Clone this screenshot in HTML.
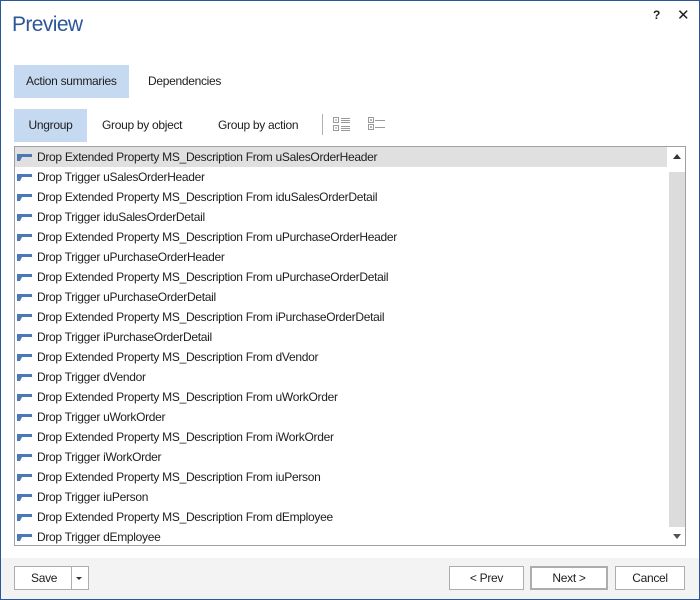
<!DOCTYPE html>
<html><head><style>
*{margin:0;padding:0;box-sizing:border-box}
body{width:700px;height:600px;background:#fff;font-family:"Liberation Sans",sans-serif;font-size:12px;color:#1e1e1e;position:relative;overflow:hidden;letter-spacing:-0.3px}
.win{position:absolute;left:0;top:0;width:700px;height:600px;border:1px solid #2b579a}
.title{position:absolute;left:12px;top:13px;font-size:21px;color:#2b579a;letter-spacing:-0.6px}
.help{position:absolute;left:653px;top:8px;font-weight:bold;font-size:12px}
.close{position:absolute;left:677px;top:6px;font-size:15px}
.tab{position:absolute;height:33px;line-height:33px;padding:0 12px;font-size:12px}
.sel{background:#c5d9f1}
.list{position:absolute;left:14px;top:146px;width:672px;height:400px;border:1px solid #a0a0a0;background:#fff}
.row{height:20px;line-height:20px;padding-left:22px;position:relative;white-space:nowrap}
.row svg{position:absolute;left:2px;top:6px}
.row.h{background:#e0e0e0;margin-right:18px}
.sb{position:absolute;right:0;top:0;width:17px;height:398px;background:#fff}
.thumb{position:absolute;left:1px;top:25px;width:16px;height:355px;background:#dcdcdc}
.footer{position:absolute;left:1px;top:558px;width:698px;height:41px;background:#f3f3f3}
.btn{position:absolute;top:566px;height:24px;border:1px solid #adadad;background:#fff;text-align:center;line-height:22px;font-size:12px}
</style></head><body>
<div class="win"></div>
<div class="title">Preview</div>
<div class="help">?</div><div class="close">✕</div>
<div class="tab sel" style="left:14px;top:65px">Action summaries</div>
<div class="tab" style="left:136px;top:65px">Dependencies</div>
<div class="tab sel" style="left:14px;top:109px;width:73px;text-align:center;padding:0">Ungroup</div>
<div class="tab" style="left:90px;top:109px">Group by object</div>
<div class="tab" style="left:206px;top:109px">Group by action</div>
<div style="position:absolute;left:322px;top:114px;width:1px;height:21px;background:#b0b0b0"></div>
<svg style="position:absolute;left:333px;top:117px" width="18" height="18" viewBox="0 0 18 18" fill="none" stroke="#999" stroke-width="1"><rect x="0.5" y="0.5" width="5" height="5"/><rect x="0.5" y="8.5" width="5" height="5"/><path d="M2 3h2M2 11h2M8 1.5h9M8 3.5h9M8 5.5h9M8 9.5h9M8 11.5h9M8 13.5h9"/></svg>
<svg style="position:absolute;left:368px;top:117px" width="18" height="16" viewBox="0 0 18 16" fill="none" stroke="#999" stroke-width="1"><rect x="0.5" y="0.5" width="5" height="5"/><rect x="0.5" y="7.5" width="5" height="5"/><path d="M2 3h2M3 2v2M2 10h2M3 9v2M7 3.5h10M7 10.5h10"/></svg>
<div class="list">
<div class="sb"><div style="position:absolute;left:5px;top:7px;border-left:4px solid transparent;border-right:4px solid transparent;border-bottom:5px solid #333"></div><div class="thumb"></div><div style="position:absolute;left:5px;top:387px;border-left:4px solid transparent;border-right:4px solid transparent;border-top:5px solid #555"></div></div>
<div id="rows"></div>
</div>
<div class="footer"></div>
<div class="btn" style="left:14px;width:75px;text-align:left;padding-left:16px">Save<div style="position:absolute;left:56px;top:0;width:1px;height:22px;background:#adadad"></div><div style="position:absolute;left:61px;top:10px;border-left:3px solid transparent;border-right:3px solid transparent;border-top:3px solid #333"></div></div>
<div class="btn" style="left:449px;width:75px">&lt; Prev</div>
<div class="btn" style="left:530px;width:78px;border:2px solid #adadad;line-height:20px">Next &gt;</div>
<div class="btn" style="left:615px;width:70px">Cancel</div>
<script>
var items=["Drop Extended Property MS_Description From uSalesOrderHeader","Drop Trigger uSalesOrderHeader","Drop Extended Property MS_Description From iduSalesOrderDetail","Drop Trigger iduSalesOrderDetail","Drop Extended Property MS_Description From uPurchaseOrderHeader","Drop Trigger uPurchaseOrderHeader","Drop Extended Property MS_Description From uPurchaseOrderDetail","Drop Trigger uPurchaseOrderDetail","Drop Extended Property MS_Description From iPurchaseOrderDetail","Drop Trigger iPurchaseOrderDetail","Drop Extended Property MS_Description From dVendor","Drop Trigger dVendor","Drop Extended Property MS_Description From uWorkOrder","Drop Trigger uWorkOrder","Drop Extended Property MS_Description From iWorkOrder","Drop Trigger iWorkOrder","Drop Extended Property MS_Description From iuPerson","Drop Trigger iuPerson","Drop Extended Property MS_Description From dEmployee","Drop Trigger dEmployee"];
var h="";items.forEach(function(t,i){h+='<div class="row'+(i==0?' h':'')+'"><svg width="16" height="8" viewBox="0 0 16 8"><path d="M0 1h15v3H5L3 8H0z" fill="#4a78b8"/></svg>'+t+'</div>'});
document.getElementById("rows").innerHTML=h;
</script>
</body></html>
